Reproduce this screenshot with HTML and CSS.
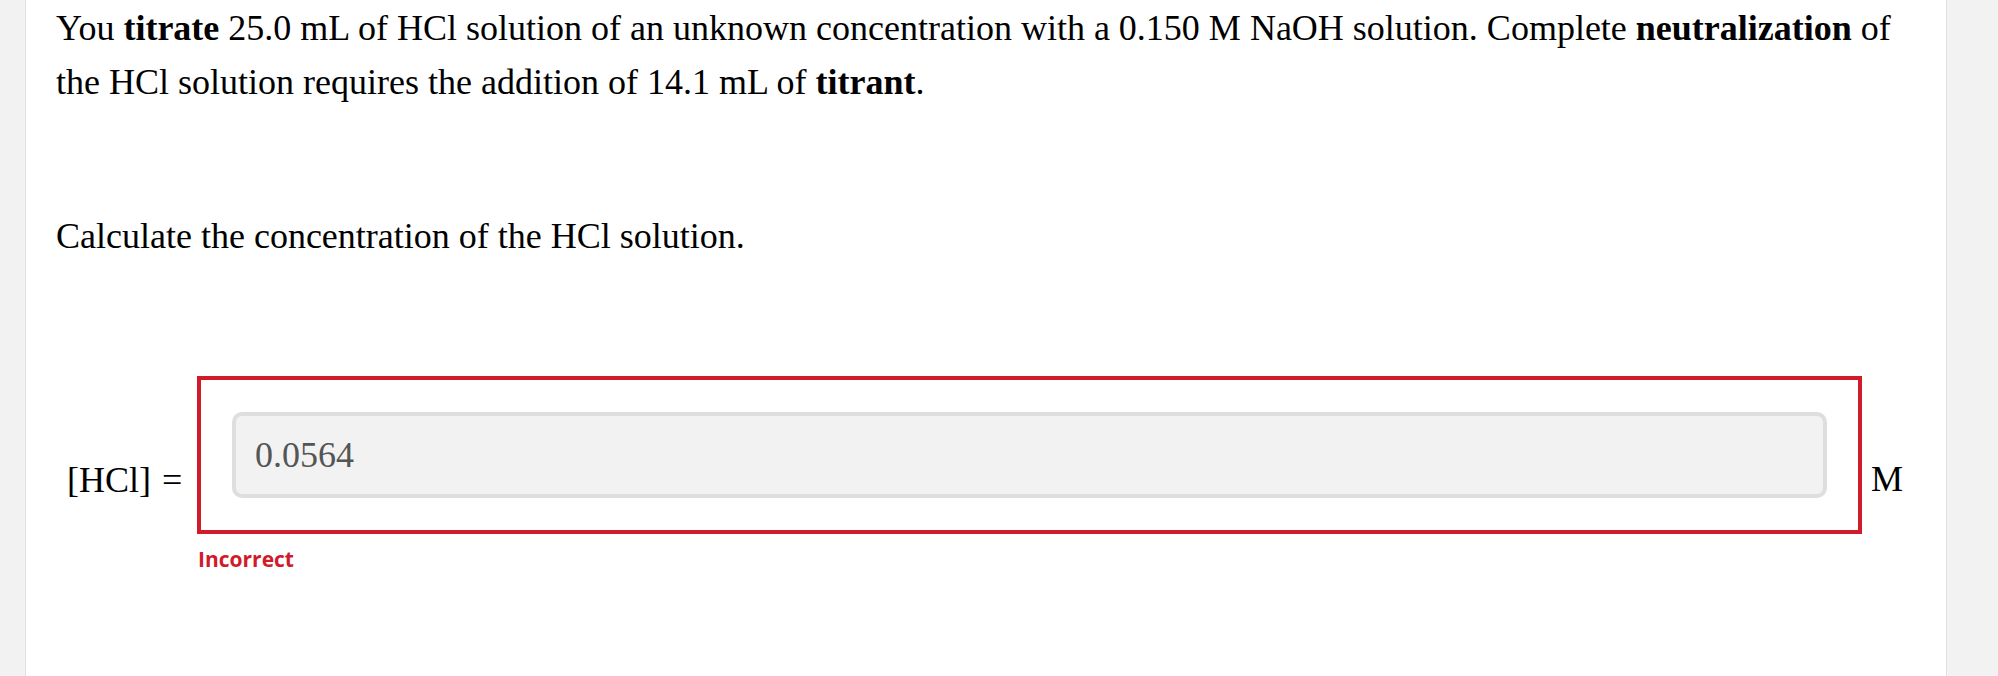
FILE: index.html
```html
<!DOCTYPE html>
<html lang="en">
<head>
<meta charset="utf-8">
<title>Titration question</title>
<link rel="stylesheet" href="styles.css">
</head>
<body>
<main class="card">
  <p class="stem">You <strong>titrate</strong> 25.0 mL of HCl solution of an unknown concentration with a 0.150 M NaOH solution. Complete <strong>neutralization</strong> of the HCl solution requires the addition of 14.1 mL of <strong>titrant</strong>.</p>
  <p class="prompt">Calculate the concentration of the HCl solution.</p>
  <div class="answer-row">
    <span class="label">[HCl] =</span>
    <div class="answer-box">
      <input class="answer-input" type="text" value="0.0564" readonly>
    </div>
    <span class="unit">M</span>
    <div class="feedback">Incorrect</div>
  </div>
</main>
</body>
</html>
```

FILE: styles.css
```css
html, body {
  margin: 0;
  padding: 0;
}

body {
  background: #f2f2f2;
  font-family: "Liberation Serif", "Times New Roman", serif;
  color: #000;
  overflow: hidden;
}

.card {
  margin: 0 51px 0 25px;
  background: #fff;
  border-left: 1px solid #e2e2e2;
  border-right: 1px solid #e2e2e2;
  padding: 1px 30px 0 30px;
  min-height: 100vh;
  box-sizing: border-box;
}

.stem,
.prompt {
  margin: 0;
  font-size: 36px;
  line-height: 54px;
}

.stem strong {
  font-weight: 700;
}

.prompt {
  margin-top: 100px;
}

.answer-row {
  margin-top: 113px;
  display: grid;
  grid-template-columns: 130px 1fr auto;
  grid-template-rows: auto auto;
  padding-left: 11px;
}

.label {
  grid-column: 1;
  grid-row: 1;
  align-self: end;
  font-size: 36px;
  line-height: 54px;
  margin-bottom: 27px;
  white-space: nowrap;
  word-spacing: 2px;
}

.answer-box {
  grid-column: 2;
  grid-row: 1;
  border: 4px solid #d11a2a;
  padding: 32px 31px;
}

.answer-input {
  display: block;
  width: 100%;
  height: 86px;
  box-sizing: border-box;
  margin: 0;
  padding: 0 19px;
  border: 4px solid #dedede;
  border-radius: 10px;
  background: #f2f2f2;
  color: #555;
  font-family: "Liberation Serif", "Times New Roman", serif;
  font-size: 36px;
  outline: none;
}

.unit {
  grid-column: 3;
  grid-row: 1;
  align-self: end;
  font-size: 36px;
  line-height: 54px;
  margin: 0 13px 28px 9px;
}

.feedback {
  grid-column: 2;
  grid-row: 2;
  margin-top: 11px;
  margin-left: 1px;
  font-family: "Open Sans", "Liberation Sans", sans-serif;
  font-weight: 700;
  font-size: 21px;
  line-height: 29px;
  color: #d11a2a;
}
```
